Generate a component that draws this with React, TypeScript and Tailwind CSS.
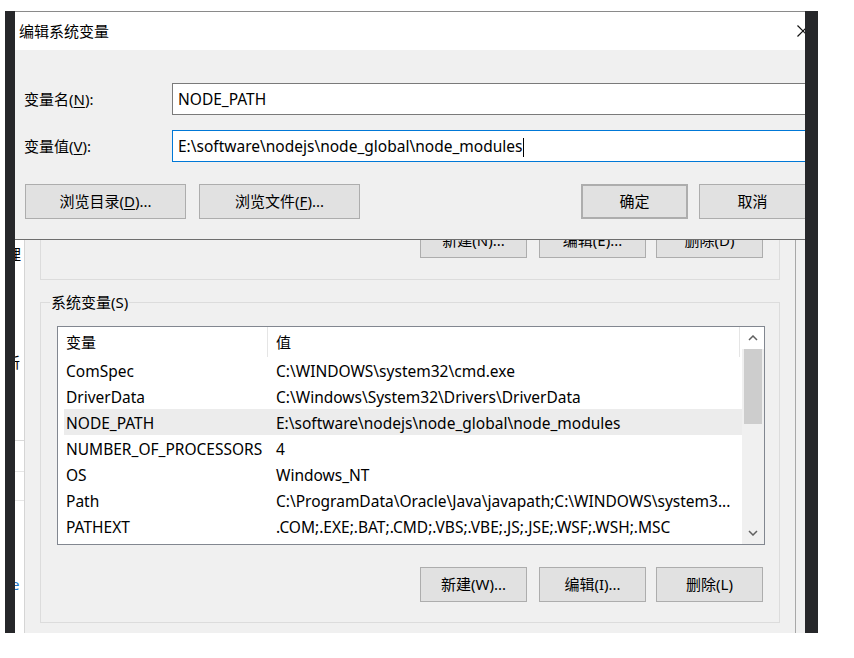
import React from 'react';

const SYS_VARS = [
  { name: 'ComSpec', value: 'C:\\WINDOWS\\system32\\cmd.exe' },
  { name: 'DriverData', value: 'C:\\Windows\\System32\\Drivers\\DriverData' },
  { name: 'NODE_PATH', value: 'E:\\software\\nodejs\\node_global\\node_modules', selected: true },
  { name: 'NUMBER_OF_PROCESSORS', value: '4' },
  { name: 'OS', value: 'Windows_NT' },
  { name: 'Path', value: 'C:\\ProgramData\\Oracle\\Java\\javapath;C:\\WINDOWS\\system3...' },
  { name: 'PATHEXT', value: '.COM;.EXE;.BAT;.CMD;.VBS;.VBE;.JS;.JSE;.WSF;.WSH;.MSC' },
];

function WinButton({ children, className = '' }: { children: React.ReactNode; className?: string }) {
  return (
    <div
      className={`flex items-center justify-center bg-[#e1e1e1] border border-[#adadad] text-[15px] leading-none text-black ${className}`}
    >
      {children}
    </div>
  );
}

function Mn({ children }: { children: React.ReactNode }) {
  return <span className="underline underline-offset-2">{children}</span>;
}

export default function App() {
  return (
    <div className="w-[854px] h-[658px] bg-white overflow-hidden font-['Noto_Sans','Noto_Sans_CJK_SC',sans-serif] text-black">
      <div className="flex pt-[11px] pl-[5px] h-[633px]">
        {/* desktop edge */}
        <div className="w-[10px] bg-[#26272a]" />

        <div className="relative w-[790px] flex bg-[#f0f0f0] overflow-hidden">
          {/* sidebar of the window behind, mostly hidden */}
          <div className="w-[10px] shrink-0 bg-white border-r border-[#d5d5d5] flex flex-col overflow-hidden text-[15px] leading-none whitespace-nowrap">
            <div className="h-[236px] shrink-0" />
            <div className="h-[16px] shrink-0 ml-[-9px]">理</div>
            <div className="h-[92px] shrink-0" />
            <div className="h-[16px] shrink-0 ml-[-10px]">新</div>
            <div className="h-[69px] shrink-0" />
            <div className="h-[31px] shrink-0 border-t border-[#d9d9d9]" />
            <div className="h-[29px] shrink-0 border-t border-[#e6e6e6]" />
            <div className="h-[77px] shrink-0 border-t border-[#e6e6e6]" />
            <div className="h-[16px] shrink-0 ml-[-4px] text-[#1a73c8]">e</div>
          </div>

          {/* environment variables window */}
          <div className="w-[771px] shrink-0 border-r border-[#a8a8a8] flex flex-col pt-[20px] pl-[15px]">
            <div className="w-[740px] h-[249px] border border-[#dcdcdc] flex items-end justify-end pb-[21px] pr-[16px] gap-[12px]">
              <WinButton className="w-[107px] h-[35px]">新建(N)...</WinButton>
              <WinButton className="w-[107px] h-[35px] mr-[-2px]">编辑(E)...</WinButton>
              <WinButton className="w-[107px] h-[35px]">删除(D)</WinButton>
            </div>

            <div className="relative w-[740px] h-[321px] mt-[22px] border border-[#dcdcdc] flex flex-col pt-[23px] pl-[16px] pr-[14px]">
              <div className="absolute -top-[10px] left-[9px] px-[1px] bg-[#f0f0f0] text-[15px] leading-[18px]">
                系统变量(S)
              </div>

              <div className="h-[219px] border border-[#828790] bg-white flex">
                <div className="w-[684px] flex flex-col text-[15.5px] leading-none">
                  <div className="h-[30px] flex shrink-0 text-[15px]">
                    <div className="w-[210px] pl-[8px] flex items-center border-r border-[#e5e5e5]">变量</div>
                    <div className="w-[472px] pl-[8px] flex items-center border-r border-[#e5e5e5]">值</div>
                  </div>
                  {SYS_VARS.map((v) => (
                    <div
                      key={v.name}
                      className={`h-[26px] shrink-0 ml-[6px] pt-[4px] flex items-center ${v.selected ? 'bg-[#ececec]' : ''}`}
                    >
                      <div className="w-[204px] pl-[2px] whitespace-nowrap">{v.name}</div>
                      <div className="pl-[8px] whitespace-nowrap">{v.value}</div>
                    </div>
                  ))}
                </div>

                {/* scrollbar */}
                <div className="w-[22px] flex flex-col bg-[#f0f0f0]">
                  <div className="h-[22px] bg-white flex items-center justify-center">
                    <svg width="10" height="6" viewBox="0 0 10 6">
                      <polyline points="1,5 5,1 9,5" fill="none" stroke="#606060" strokeWidth="1.5" />
                    </svg>
                  </div>
                  <div className="h-[75px] mx-[2px] bg-[#cdcdcd]" />
                  <div className="flex-1" />
                  <div className="h-[22px] flex items-center justify-center">
                    <svg width="10" height="6" viewBox="0 0 10 6">
                      <polyline points="1,1 5,5 9,1" fill="none" stroke="#606060" strokeWidth="1.5" />
                    </svg>
                  </div>
                </div>
              </div>

              <div className="flex justify-end gap-[12px] mt-[22px] pr-[2px]">
                <WinButton className="w-[107px] h-[35px]">新建(W)...</WinButton>
                <WinButton className="w-[107px] h-[35px] mr-[-2px]">编辑(I)...</WinButton>
                <WinButton className="w-[107px] h-[35px]">删除(L)</WinButton>
              </div>
            </div>
          </div>

          {/* 编辑系统变量 dialog, lying over the window */}
          <div className="absolute left-0 top-0 w-[800px] border-t border-[#8a8a8a] border-b border-b-[#6e6e6e] flex flex-col">
            <div className="h-[38px] bg-white flex items-center justify-between pl-[4px] pr-[6px]">
              <span className="text-[15px] leading-none">编辑系统变量</span>
              <svg width="12" height="12" viewBox="0 0 12 12">
                <line x1="0.5" y1="0.5" x2="11.5" y2="11.5" stroke="#111" strokeWidth="1.2" />
                <line x1="11.5" y1="0.5" x2="0.5" y2="11.5" stroke="#111" strokeWidth="1.2" />
              </svg>
            </div>

            <div className="bg-[#f0f0f0] flex flex-col pt-[33px] pb-[20px] text-[15px] leading-none">
              <div className="flex items-center h-[32px]">
                <div className="w-[157px] pl-[9px]">
                  变量名(<Mn>N</Mn>):
                </div>
                <div className="flex-1 h-[32px] bg-white border border-[#7a7a7a] flex items-center pl-[5px] pt-[2px] text-[15.5px]">
                  NODE_PATH
                </div>
              </div>
              <div className="flex items-center h-[32px] mt-[15px]">
                <div className="w-[157px] pl-[9px]">
                  变量值(<Mn>V</Mn>):
                </div>
                <div className="flex-1 h-[32px] bg-white border border-[#0078d7] flex items-center pl-[5px] pt-[2px] text-[15.5px]">
                  <span>E:\software\nodejs\node_global\node_modules</span>
                  <span className="w-[1px] h-[19px] bg-black ml-[1px]" />
                </div>
              </div>

              <div className="flex justify-between mt-[22px] pl-[10px] pr-[9px]">
                <div className="flex gap-[13px]">
                  <WinButton className="w-[161px] h-[35px]">
                    浏览目录(<Mn>D</Mn>)...
                  </WinButton>
                  <WinButton className="w-[161px] h-[35px]">
                    浏览文件(<Mn>F</Mn>)...
                  </WinButton>
                </div>
                <div className="flex gap-[11px]">
                  <WinButton className="w-[107px] h-[35px] border-2 border-[#0078d7]">确定</WinButton>
                  <WinButton className="w-[107px] h-[35px]">取消</WinButton>
                </div>
              </div>
            </div>
          </div>
        </div>

        {/* desktop edge */}
        <div className="w-[13px] bg-[#26272a]" />
      </div>
    </div>
  );
}
